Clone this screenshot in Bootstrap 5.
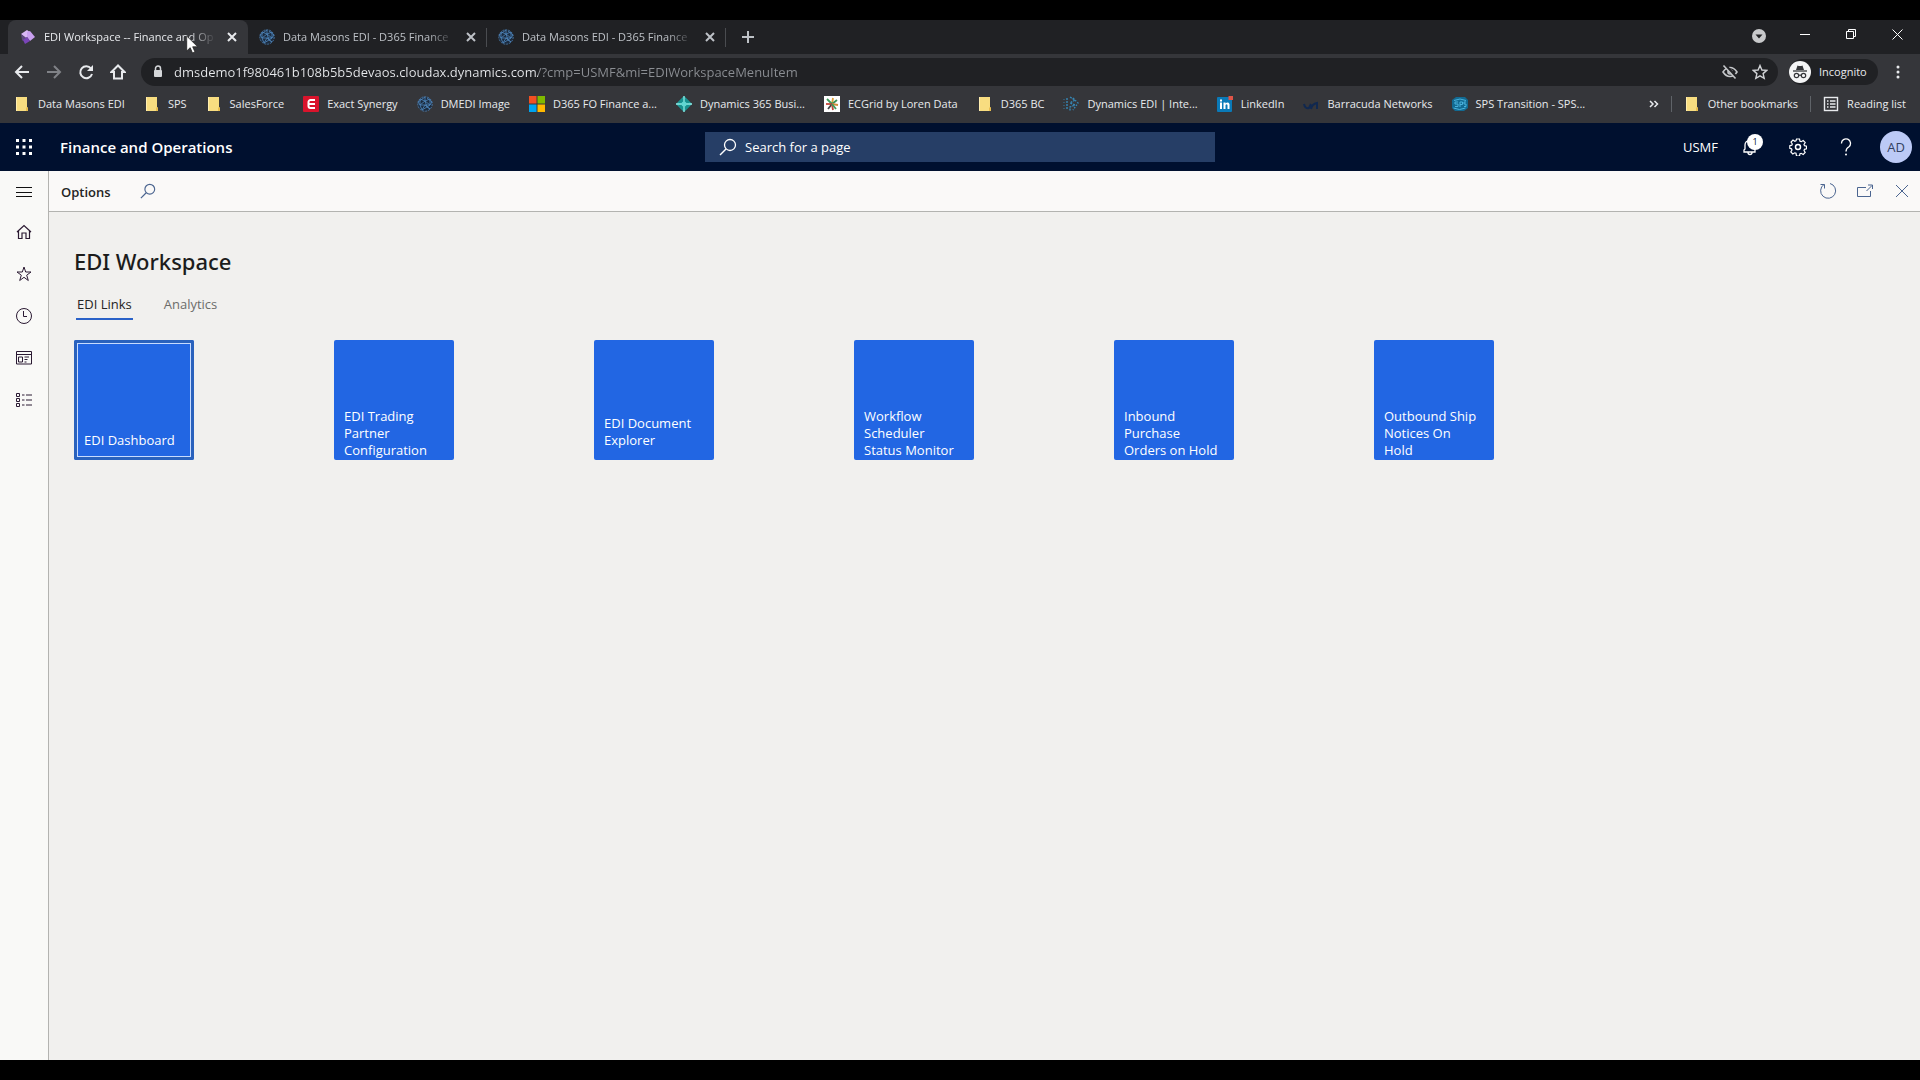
<!DOCTYPE html>
<html lang="en">
<head>
<meta charset="utf-8">
<meta name="viewport" content="width=device-width, initial-scale=1">
<title>EDI Workspace -- Finance and Operations</title>
<link href="https://cdn.jsdelivr.net/npm/bootstrap@5.3.0/dist/css/bootstrap.min.css" rel="stylesheet">
<style>
  :root { --chrome: #35363a; --strip: #202124; --navy: #00102f; --tile: #2266e3; --rule: #b3b3b0; }
  body { font-family: "Open Sans", "Noto Sans", sans-serif; font-size: 13px; line-height: 20px; background: #000; color: #242424; padding: 20px 0; }
  svg { display: block; flex: none; }
  button { font: inherit; color: inherit; background: none; border: 0; padding: 0; }
  input { font: inherit; border: 0; outline: 0; background: none; padding: 0; }
  a { color: inherit; text-decoration: none; }
  .ico-btn { display: flex; align-items: center; justify-content: center; flex: none; }
  .side { flex: 1 1 0; min-width: 0; }

  /* browser chrome */
  .tab-strip { background: var(--strip); height: 34px; color: #bdc1c6; font-size: 11px; padding-left: 8px; }
  .b-tab { width: 239px; height: 34px; padding: 0 8px 0 11px; position: relative; }
  .b-tab + .b-tab::after { content: ""; position: absolute; right: 0; top: 8px; height: 19px; border-right: 1px solid #4a4c50; }
  .b-tab.current { background: var(--chrome); color: #e8eaed; border-radius: 8px 8px 0 0; width: 240px; padding-left: 12px; }
  .b-title { flex: 1 1 0; min-width: 0; overflow: hidden; white-space: nowrap; mask-image: linear-gradient(90deg, #000 84%, transparent); -webkit-mask-image: linear-gradient(90deg, #000 84%, transparent); }
  .win { width: 46px; height: 28px; color: #fff; }
  .tool-row { background: var(--chrome); color: #e8eaed; padding: 4px 2px 0 6px; }
  .tool-row > .ico-btn { width: 32px; height: 28px; }
  .address { background: var(--strip); height: 28px; border-radius: 14px; margin: 0 11px 0 7px; padding: 0 10px 0 11px; gap: 10px; }
  .url { flex: 1; min-width: 0; height: 20px; color: #e8eaed; background: linear-gradient(90deg, #e8eaed 364px, #8b8e93 364px); -webkit-background-clip: text; background-clip: text; -webkit-text-fill-color: transparent; }
  .incog { background: var(--strip); height: 26px; border-radius: 13px; width: 89px; font-size: 11px; }
  .marks { background: var(--chrome); color: #e8eaed; height: 37px; font-size: 11px; padding: 0 14px 2px; white-space: nowrap; }
  .mark-list { gap: 19px; }
  .marks a { display: flex; align-items: center; gap: 8px; }
  .sep { width: 1px; height: 16px; background: #5f6368; margin: 0 12px; }

  /* app header */
  .app-head { background: var(--navy); color: #fff; height: 48px; }
  .app-head .ico-btn { width: 48px; height: 48px; }
  .brand { font-size: 15px; font-weight: 600; }
  .find { background: #263e66; width: 510px; height: 30px; padding-left: 14px; }
  .find input { color: #fff; }
  .find input::placeholder { color: #fff; opacity: 1; }
  .notice { position: relative; }
  .notice span { position: absolute; left: 21px; top: 11px; width: 16px; height: 16px; border-radius: 50%; background: #fff; color: #00102f; font-size: 9px; line-height: 16px; text-align: center; }
  .avatar { width: 32px; height: 32px; border-radius: 50%; background: #bccaf6; color: #33415f; margin: 0 8px 0 10px; }

  /* app body */
  .rail { width: 49px; background: #f9f9f7; border-right: 1px solid var(--rule); color: #2b1a33; }
  .rail button { width: 48px; height: 42px; }
  .rail button:first-child { height: 40px; padding-top: 2px; }
  .actions { background: #faf9f8; height: 41px; border-bottom: 1px solid var(--rule); padding-left: 12px; gap: 19px; }
  .actions > button:first-child { padding-top: 2px; }
  .actions .ico-btn { width: 37px; height: 40px; color: #4b6590; }
  .work { background: #f1f0ee; padding: 33px 25px; }
  .work h1 { font-family: "Noto Sans", "Open Sans", sans-serif; font-size: 22px; line-height: 32px; font-weight: 500; margin: 0; color: #1c1c1c; }
  .pivot { gap: 30px; padding: 13px 2px 0; }
  .pivot button { height: 30px; padding: 0 1px; color: #6c6c6a; border-bottom: 2px solid transparent; }
  .pivot button.active { color: #242424; border-color: #2b62c8; }
  .tiles { display: grid; grid-template-columns: repeat(auto-fill, 120px); column-gap: 140px; row-gap: 20px; padding-top: 20px; }
  .tile { display: flex; flex-direction: column; justify-content: flex-end; height: 120px; background: var(--tile); color: #fff; border-radius: 2px; padding: 0 14px 11px 10px; line-height: 17px; }
  .tile span { max-height: 41px; }
  .tile.focused { outline: 1px solid #c7dbff; outline-offset: -4px; box-shadow: inset 0 0 0 3px #2a62bd; }
  .pointer { position: absolute; left: 186px; top: 35px; z-index: 5; }
</style>
<script src="https://cdn.jsdelivr.net/npm/bootstrap@5.3.0/dist/js/bootstrap.bundle.min.js"></script>
</head>
<body class="d-flex flex-column min-vh-100">

<svg width="0" height="0" class="position-absolute" aria-hidden="true">
  <symbol id="mesh" viewBox="0 0 16 16"><circle cx="8" cy="8" r="7" fill="#1c2c40"/><g fill="none" stroke="#4f86bd" stroke-width=".8"><circle cx="8" cy="8" r="7.2" stroke-dasharray="2 1"/><path d="M3 3l5 2 5-2M8 5l-5 4 2 5 5-3-2-6 5 4-3 2 3 2M3 9L1 6l7-5 0 4M13 9l2-3-5-4M3 9l10 0M5 14l3-5 5 4M3 3v6M13 3v6"/></g></symbol>
  <symbol id="folder" viewBox="0 0 16 16"><path d="M2 1h11v10l1 1v3H2z" fill="#f8dd80"/><path d="M2 1h1v14H2z" fill="#ffeeb0"/><path d="M12 11.500h2V15h-2z" fill="#e9bd4e"/></symbol>
  <symbol id="x" viewBox="0 0 16 16"><path d="M4 4l8 8M12 4l-8 8" stroke="currentColor" stroke-width="2" fill="none"/></symbol>
  <symbol id="lens" viewBox="0 0 18 18"><circle cx="11" cy="7" r="5.500" fill="none" stroke="currentColor" stroke-width="1.300"/><path d="M7 11L1 17" stroke="currentColor" stroke-width="1.400"/></symbol>
</svg>

<header>
  <div class="tab-strip d-flex align-items-center">
    <div class="b-tab current d-flex align-items-center gap-2">
      <svg width="16" height="16" viewBox="0 0 16 16"><path d="M1 5l6-4 4 3-5 5z" fill="#d9b8f5"/><path d="M7 3l3-1 5 6-5 4-3-4z" fill="#c9a0f0"/><path d="M1 5l5 4-3 3-1-1z" fill="#5f4a80"/><path d="M3 11l4-3 3 4-5 3z" fill="#7a45b8"/></svg>
      <span class="b-title">EDI Workspace -- Finance and Op</span>
      <button class="ico-btn" aria-label="Close tab"><svg width="16" height="16"><use href="#x"/></svg></button>
    </div>
    <div class="b-tab d-flex align-items-center gap-2">
      <svg width="16" height="16"><use href="#mesh"/></svg>
      <span class="b-title">Data Masons EDI - D365 Finance</span>
      <button class="ico-btn" aria-label="Close tab"><svg width="16" height="16"><use href="#x"/></svg></button>
    </div>
    <div class="b-tab d-flex align-items-center gap-2">
      <svg width="16" height="16"><use href="#mesh"/></svg>
      <span class="b-title">Data Masons EDI - D365 Finance</span>
      <button class="ico-btn" aria-label="Close tab"><svg width="16" height="16"><use href="#x"/></svg></button>
    </div>
    <button class="ico-btn ms-3" aria-label="New tab"><svg width="12" height="12" viewBox="0 0 12 12"><path d="M6 0v12M0 6h12" stroke="currentColor" stroke-width="2"/></svg></button>
    <div class="d-flex ms-auto align-self-start">
      <button class="ico-btn win pt-1" aria-label="Search tabs"><svg width="14" height="14" viewBox="0 0 14 14"><circle cx="7" cy="7" r="7" fill="#c8c9cb"/><path d="M3.500 5.500h7L7 9.500z" fill="#202124"/></svg></button>
      <button class="ico-btn win" aria-label="Minimize"><svg width="10" height="10" viewBox="0 0 10 10"><path d="M0 5.500h10" stroke="currentColor"/></svg></button>
      <button class="ico-btn win" aria-label="Restore"><svg width="10" height="10" viewBox="0 0 10 10"><path d="M.5 2.500h7v7h-7zM2.500 2.500v-2h7v7h-2" fill="none" stroke="currentColor"/></svg></button>
      <button class="ico-btn win" aria-label="Close window"><svg width="11" height="11" viewBox="0 0 11 11"><path d="M.5.5l10 10M10.500.5l-10 10" stroke="currentColor"/></svg></button>
    </div>
  </div>

  <div class="tool-row d-flex align-items-center">
    <button class="ico-btn" aria-label="Back"><svg width="16" height="16" viewBox="0 0 16 16"><path d="M15 8H2M8 2L2 8l6 6" fill="none" stroke="currentColor" stroke-width="2"/></svg></button>
    <button class="ico-btn" aria-label="Forward"><svg width="16" height="16" viewBox="0 0 16 16"><path d="M1 8h13M8 2l6 6-6 6" fill="none" stroke="#808287" stroke-width="2"/></svg></button>
    <button class="ico-btn" aria-label="Reload"><svg width="16" height="16" viewBox="0 0 16 16"><path d="M13 4.500A6 6 0 1 0 14 10" fill="none" stroke="currentColor" stroke-width="2"/><path d="M15 1v6H9z" fill="currentColor"/></svg></button>
    <button class="ico-btn" aria-label="Home"><svg width="16" height="16" viewBox="0 0 16 16"><path d="M8 1.500L1.500 8H4v6.500h8V8h2.500z" fill="none" stroke="currentColor" stroke-width="2"/></svg></button>
    <form class="address d-flex align-items-center flex-grow-1" onsubmit="return false">
      <svg width="12" height="14" viewBox="0 0 12 14"><path d="M3.500 6V3.500a2.500 2.500 0 0 1 5 0V6" fill="none" stroke="#d5d7da" stroke-width="1.500"/><rect x="2" y="5" width="8" height="7" rx="1" fill="#d5d7da"/></svg>
      <input class="url" type="text" aria-label="Address" spellcheck="false" value="dmsdemo1f980461b108b5b5devaos.cloudax.dynamics.com/?cmp=USMF&amp;mi=EDIWorkspaceMenuItem">
      <button type="button" class="ico-btn" aria-label="Third-party cookies blocked"><svg width="16" height="16" viewBox="0 0 16 16" fill="none" stroke="#c4c6c9" stroke-width="1.600"><path d="M1 8q3-4.500 7-4.500T15 8q-3 4.500-7 4.500T1 8z"/><circle cx="8" cy="8" r="2"/><path d="M3 1l12 13" stroke="#202124" stroke-width="3"/><path d="M1.500 1.500l12 13"/></svg></button>
      <button type="button" class="ico-btn ms-1" aria-label="Bookmark this page"><svg width="16" height="16" viewBox="0 0 16 16"><path d="M8 1.500l1.900 4.500 4.900.4-3.700 3.200 1.100 4.800L8 11.900l-4.200 2.500 1.100-4.800L1.200 6.400 6.100 6z" fill="none" stroke="#d0d2d5" stroke-width="1.400"/></svg></button>
    </form>
    <button class="incog d-flex align-items-center gap-2 flex-shrink-0">
      <svg width="22" height="22" viewBox="0 0 22 22"><circle cx="11" cy="11" r="11" fill="#f4f5f6"/><path d="M7 9l1.500-4.500q2.500 1 5 0L15 9z" fill="#35363a"/><path d="M4 10h14" stroke="#35363a" stroke-width="1.300"/><g fill="none" stroke="#35363a" stroke-width="1.200"><circle cx="7.500" cy="14.500" r="2.200"/><circle cx="14.500" cy="14.500" r="2.200"/><path d="M9.700 14.200h2.600"/></g></svg>Incognito</button>
    <button class="ico-btn ms-1 me-1" aria-label="Menu"><svg width="4" height="16" viewBox="0 0 4 16" fill="currentColor"><circle cx="2" cy="3" r="1.500"/><circle cx="2" cy="8" r="1.500"/><circle cx="2" cy="13" r="1.500"/></svg></button>
  </div>

  <nav class="marks d-flex align-items-center" aria-label="Bookmarks">
    <div class="mark-list d-flex align-items-center">
    <a href="#"><svg width="16" height="16"><use href="#folder"/></svg>Data Masons EDI</a>
    <a href="#"><svg width="16" height="16"><use href="#folder"/></svg>SPS</a>
    <a href="#"><svg width="16" height="16"><use href="#folder"/></svg>SalesForce</a>
    <a href="#"><svg width="16" height="16" viewBox="0 0 16 16"><rect width="16" height="16" rx="1" fill="#d9142c"/><path d="M12 4H7.500a2 2 0 0 0-2 2v4a2 2 0 0 0 2 2H12M5.500 8H12" fill="none" stroke="#fff" stroke-width="2"/></svg>Exact Synergy</a>
    <a href="#"><svg width="16" height="16"><use href="#mesh"/></svg>DMEDI Image</a>
    <a href="#"><svg width="16" height="16" viewBox="0 0 16 16"><path d="M0 0h7.500v7.500H0z" fill="#f25022"/><path d="M8.500 0H16v7.500H8.500z" fill="#7fba00"/><path d="M0 8.500h7.500V16H0z" fill="#00a4ef"/><path d="M8.500 8.500H16V16H8.500z" fill="#ffb900"/></svg>D365 FO Finance a...</a>
    <a href="#"><svg width="16" height="16" viewBox="0 0 16 16"><path d="M8 0l8 8-8 8-8-8z" fill="#1fa3a0"/><circle cx="8" cy="8" r="5.500" fill="#17908f"/><path d="M8 0v16M0 8h16" stroke="#8de8e4" stroke-width="1.300"/><circle cx="8" cy="8" r="2.500" fill="#5fd6d2"/></svg>Dynamics 365 Busi...</a>
    <a href="#"><svg width="16" height="16" viewBox="0 0 16 16"><rect width="16" height="16" fill="#fff"/><g stroke-width="1.800"><path d="M8 8l1-6" stroke="#e0a03a"/><path d="M8 8L3 3" stroke="#3f9a5b"/><path d="M8 8l5-4" stroke="#3b8f58"/><path d="M8 8H2" stroke="#c0483c"/><path d="M8 8l6 1" stroke="#d08a3a"/><path d="M8 8l-4 5" stroke="#444"/><path d="M8 8l1 6" stroke="#c0483c"/><path d="M8 8l4 5" stroke="#3f9a5b"/></g></svg>ECGrid by Loren Data</a>
    <a href="#"><svg width="16" height="16"><use href="#folder"/></svg>D365 BC</a>
    <a href="#"><svg width="16" height="16" viewBox="0 0 16 16" fill="none" stroke="#3686b4" stroke-width="1.400"><path d="M1 3v10" stroke-dasharray="1 2" opacity=".6"/><path d="M4 2v12" stroke-dasharray="2 1"/><path d="M7 1l5 3-5 3 5 2-5 2 0 4" stroke-dasharray="2 1"/><path d="M10 2l5 5-5 7" stroke-dasharray="1.500 1.500"/></svg>Dynamics EDI | Inte...</a>
    <a href="#"><svg width="16" height="16" viewBox="0 0 16 16"><rect y="1" width="15" height="15" rx="1" fill="#0a7ab8"/><path d="M3 6.500h2V13H3zM3 3.500h2v2H3zM6.500 6.500h2v1q2.500-2 4 .5V13h-2V9q-1-1.500-2 0v4h-2z" fill="#fff"/><path d="M11.500 0H16v4h-4.500z" fill="#e05548"/></svg>LinkedIn</a>
    <a href="#"><svg width="16" height="16" viewBox="0 0 16 16"><path d="M1 8q1 5 5 4l2-4M8 13q1-5 6-6v6" fill="none" stroke="#10284f" stroke-width="2"/></svg>Barracuda Networks</a>
    <a href="#"><svg width="16" height="16" viewBox="0 0 16 16"><path d="M4 1h9l3 3v8l-4 3H3l-3-3V4z" fill="#126a92"/><path d="M2 4.500q6-3 12 0M1.500 12q6 3 12 0M6 6H3v2h3v2.500H3M8 11V6h2.500v2.500H8M14 6h-2v2h2v2.500h-2" fill="none" stroke="#4ab2dc"/></svg>SPS Transition - SPS...</a>
    </div>
    <button class="ico-btn ms-auto" aria-label="More bookmarks"><svg width="10" height="8" viewBox="0 0 10 8"><path d="M1 1l3 3-3 3M5.500 1l3 3-3 3" fill="none" stroke="currentColor" stroke-width="1.500"/></svg></button>
    <span class="sep"></span>
    <a href="#"><svg width="16" height="16"><use href="#folder"/></svg>Other bookmarks</a>
    <span class="sep"></span>
    <a href="#"><svg width="16" height="16" viewBox="0 0 16 16" fill="none" stroke="currentColor" stroke-width="1.400"><rect x="1.500" y="1.500" width="13" height="13"/><path d="M4 5h1.500M4 8h1.500M4 11h1.500M7 5h5.500M7 8h5.500M7 11h5.500"/></svg>Reading list</a>
  </nav>
</header>

<div class="app-head d-flex align-items-center">
  <div class="side d-flex align-items-center">
    <button class="ico-btn" aria-label="App launcher"><svg width="16" height="16" viewBox="0 0 16 16" fill="#fff"><path d="M0 0h3v3H0zM6.500 0h3v3h-3zM13 0h3v3h-3zM0 6.500h3v3H0zM6.500 6.500h3v3h-3zM13 6.500h3v3h-3zM0 13h3v3H0zM6.500 13h3v3h-3zM13 13h3v3h-3z"/></svg></button>
    <span class="brand ms-2 ps-1">Finance and Operations</span>
  </div>
  <div class="find d-flex align-items-center gap-2">
    <svg width="18" height="18"><use href="#lens"/></svg>
    <input class="flex-grow-1" type="search" aria-label="Search for a page" placeholder="Search for a page">
  </div>
  <div class="side d-flex align-items-center justify-content-end">
    <button class="me-2">USMF</button>
    <button class="ico-btn notice" aria-label="Notifications"><svg width="16" height="18" viewBox="0 0 16 18"><path d="M2 14V12l1-1V7a4.500 4.500 0 0 1 9 0v4l1 1v2zM6 14.500a2 2 0 0 0 4 0" fill="none" stroke="#fff" stroke-width="1.300"/></svg><span>1</span></button>
    <button class="ico-btn" aria-label="Settings"><svg width="18" height="18" viewBox="0 0 18 18" fill="none" stroke="#fff"><path d="M7.500 1h3l.5 2.200 1.200.5 2-1.200 2 2-1.200 2 .5 1.200 2 .5v2.600l-2 .5-.5 1.200 1.200 2-2 2-2-1.200-1.200.5-.5 2.200h-3L7 15.300l-1.200-.5-2 1.200-2-2 1.200-2-.5-1.200L.8 10.300V7.700l2-.5L3.300 6 2 4l2-2 1.800 1.200L7 2.700z" stroke-width="1.200"/><circle cx="9" cy="9" r="2.500" stroke-width="1.500"/></svg></button>
    <button class="ico-btn" aria-label="Help"><svg width="12" height="18" viewBox="0 0 12 18"><path d="M1.500 5.500a4.500 4.500 0 1 1 7.500 3.200Q6 10.500 6 13.500" fill="none" stroke="#fff" stroke-width="1.300"/><circle cx="6" cy="16.500" r="1" fill="#fff"/></svg></button>
    <button class="avatar">AD</button>
  </div>
</div>

<div class="d-flex flex-grow-1">
  <nav class="rail flex-shrink-0" aria-label="Main">
    <button class="ico-btn" aria-label="Expand navigation"><svg width="16" height="10" viewBox="0 0 16 10"><path d="M0 .5h16M0 5.500h16M0 9.500h16" stroke="#111"/></svg></button>
    <button class="ico-btn" aria-label="Home"><svg width="16" height="16" viewBox="0 0 16 16"><path d="M1 8l7-6.500L15 8M2.500 7v7.500h3.500V9h4v5.500h3.500V7" fill="none" stroke="currentColor" stroke-width="1.200"/></svg></button>
    <button class="ico-btn" aria-label="Favorites"><svg width="16" height="16" viewBox="0 0 16 16"><path d="M8 1l1.700 5H15l-4.300 3.200L12.300 14.500 8 11.300l-4.300 3.200L5.300 9.200 1 6h5.300z" fill="none" stroke="currentColor"/></svg></button>
    <button class="ico-btn" aria-label="Recent"><svg width="18" height="18" viewBox="0 0 18 18"><circle cx="9" cy="9" r="7.500" fill="none" stroke="currentColor"/><path d="M8.500 4v5.500H12" fill="none" stroke="currentColor"/></svg></button>
    <button class="ico-btn" aria-label="Workspaces"><svg width="16" height="14" viewBox="0 0 16 14"><path d="M.5.5h15v12.500H.5zM.5 3.500h15M2.500 6h4v5h-4zM8.500 6h4.500M8.500 8.500h3M8.500 11h2" fill="none" stroke="currentColor"/></svg></button>
    <button class="ico-btn" aria-label="Modules"><svg width="16" height="14" viewBox="0 0 16 14"><path d="M.5.500h3v3h-3zM.5 5.500h3v3h-3zM.5 10.500h3v3h-3zM6 2h2.500M10 2h6M6 7h2.500M10 7h6M6 12h2.500M10 12h6" fill="none" stroke="currentColor"/></svg></button>
  </nav>

  <div class="d-flex flex-column flex-grow-1">
    <div class="actions d-flex align-items-center">
      <button class="fw-semibold">Options</button>
      <button class="ico-btn" aria-label="Search actions"><svg width="16" height="16"><use href="#lens"/></svg></button>
      <div class="d-flex align-items-center ms-auto">
        <button class="ico-btn" aria-label="Refresh"><svg width="18" height="18" viewBox="0 0 18 18"><path d="M11 1.500A7.500 7.500 0 1 1 5 2.500M1.500 2.500h4v4" fill="none" stroke="currentColor"/></svg></button>
        <button class="ico-btn" aria-label="Open in new window"><svg width="16" height="14" viewBox="0 0 16 14"><path d="M9 3.500H.5v9h13V7M9.500 7L15 1.500M11 1h4.500v4" fill="none" stroke="currentColor"/></svg></button>
        <button class="ico-btn" aria-label="Close"><svg width="12" height="12" viewBox="0 0 12 12"><path d="M0 0l12 12M12 0L0 12" stroke="currentColor"/></svg></button>
      </div>
    </div>

    <main class="work flex-grow-1">
      <h1>EDI Workspace</h1>
      <div class="pivot d-flex" role="tablist">
        <button class="active" role="tab" aria-selected="true">EDI Links</button>
        <button role="tab" aria-selected="false">Analytics</button>
      </div>
      <div class="tiles">
        <a class="tile focused" href="#"><span>EDI Dashboard</span></a>
        <a class="tile" href="#"><span>EDI Trading Partner Configuration</span></a>
        <a class="tile" href="#"><span>EDI Document Explorer</span></a>
        <a class="tile" href="#"><span>Workflow Scheduler Status Monitor</span></a>
        <a class="tile" href="#"><span>Inbound Purchase Orders on Hold</span></a>
        <a class="tile" href="#"><span>Outbound Ship Notices On Hold</span></a>
      </div>
    </main>
  </div>
</div>

<svg class="pointer" width="13" height="20" viewBox="0 0 13 20" aria-hidden="true"><path d="M.7 1v15l3.500-3.300L6.500 18l2.500-1-2.300-5.200h5z" fill="#fff" stroke="#222" stroke-width=".8"/></svg>
</body>
</html>
